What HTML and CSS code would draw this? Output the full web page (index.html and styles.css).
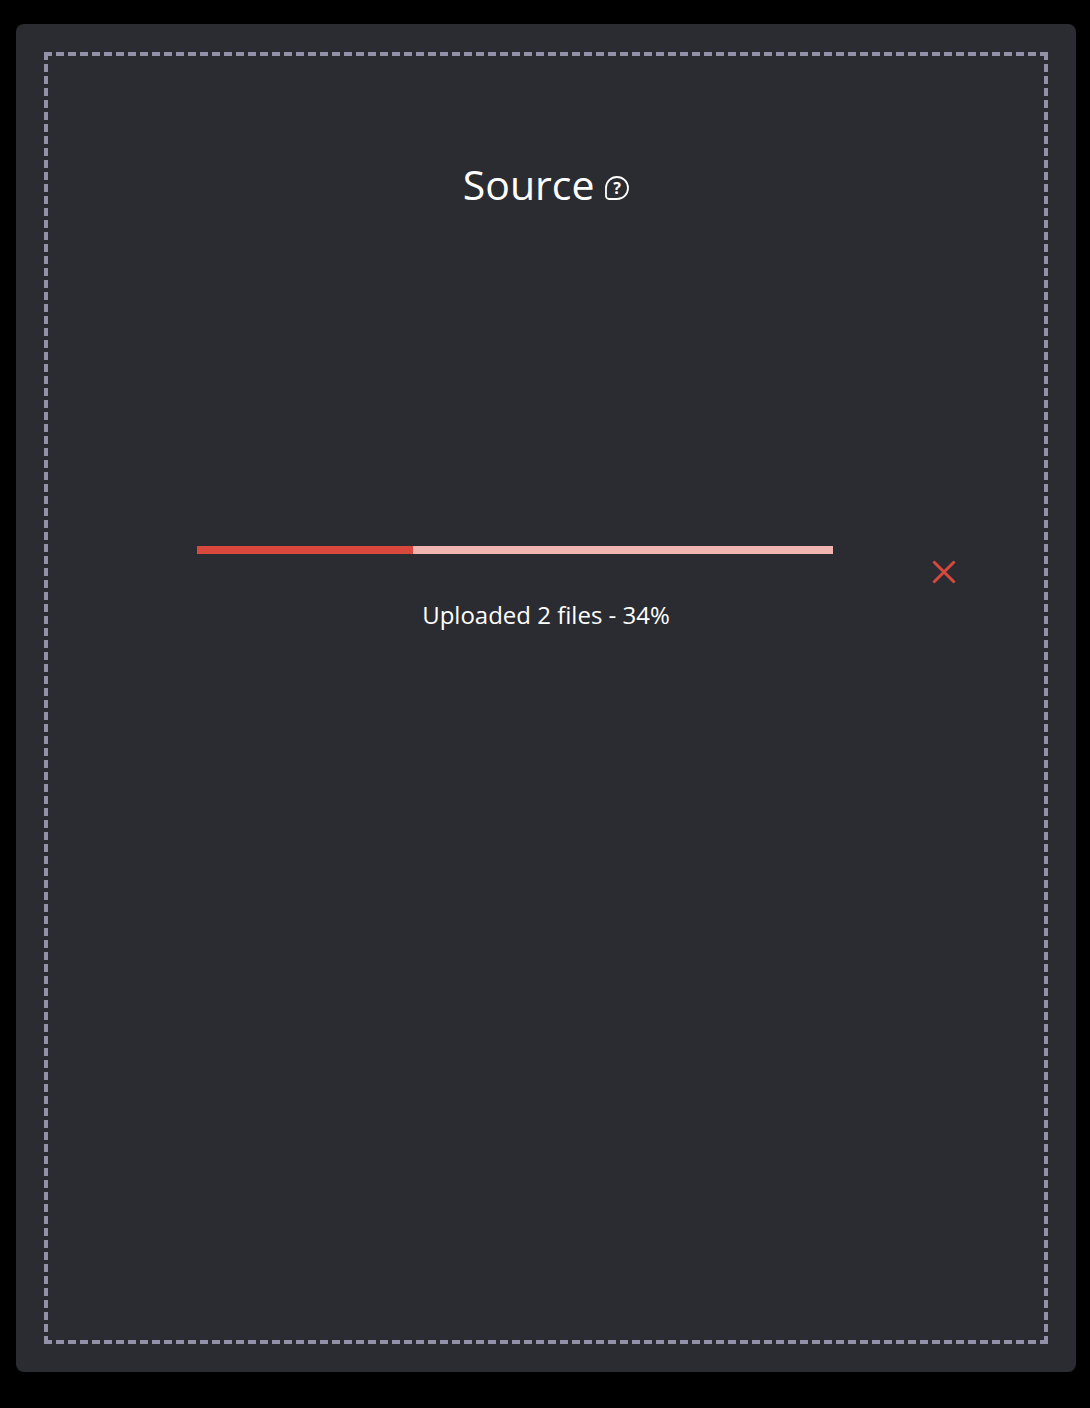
FILE: index.html
```html
<!DOCTYPE html>
<html lang="en">
<head>
<meta charset="utf-8">
<title>Source upload</title>
<link rel="stylesheet" href="styles.css">
</head>
<body>
<main class="card">
  <section class="dropzone">
    <h1 class="title">Source
      <svg class="help" viewBox="0 0 24 24" width="24" height="24" aria-hidden="true">
        <path d="M1 12a11 11 0 1 1 11 11H4a3 3 0 0 1-3-3z" fill="none" stroke="#fff" stroke-width="1.8"/>
        <text x="12" y="17.5" class="help-mark">?</text>
      </svg>
    </h1>
    <div class="progress-row">
      <div class="track"><div class="fill" style="width:34%"></div></div>
      <svg class="cancel" viewBox="0 0 26 26" width="26" height="26" aria-hidden="true">
        <path d="M2.5 2.5l21 21M23.5 2.5l-21 21" stroke="#d9483c" stroke-width="3" fill="none"/>
      </svg>
    </div>
    <p class="status">Uploaded 2 files - 34%</p>
  </section>
</main>
</body>
</html>
```
FILE: styles.css
```css
html, body {
  margin: 0;
  height: 100%;
  background: #000;
}
body {
  box-sizing: border-box;
  padding: 24px 14px 36px 16px;
  font-family: "Open Sans", "Noto Sans", sans-serif;
  color: #fff;
  overflow: hidden;
}
.card {
  box-sizing: border-box;
  height: 1348px;
  padding: 28px;
  background: #2b2c31;
  border-radius: 8px;
}
.dropzone {
  box-sizing: border-box;
  height: 100%;
  padding: 4px;
  display: flex;
  flex-direction: column;
  background-image:
    linear-gradient(to right, #9391a8 8px, transparent 8px),
    linear-gradient(to right, #9391a8 8px, transparent 8px),
    linear-gradient(to bottom, #9391a8 8px, transparent 8px),
    linear-gradient(to bottom, #9391a8 8px, transparent 8px);
  background-size: 12px 4px, 12px 4px, 4px 12px, 4px 12px;
  background-position: left top, left bottom, left top, right top;
  background-repeat: repeat-x, repeat-x, repeat-y, repeat-y;
}
.title {
  margin: 101px 0 0;
  font-size: 41px;
  line-height: 54px;
  font-weight: 400;
  text-align: center;
}
.help {
  vertical-align: 0;
}
.help-mark {
  font-family: "Open Sans", sans-serif;
  font-size: 16px;
  font-weight: 700;
  fill: #fff;
  text-anchor: middle;
}
.progress-row {
  display: flex;
  align-items: flex-start;
  gap: 97.5px;
  margin: 335px 0 0 149px;
}
.track {
  width: 636px;
  height: 8px;
  background: #f0b5b1;
}
.fill {
  height: 100%;
  background: #d9483c;
}
.cancel {
  margin-top: 13px;
}
.status {
  margin: 14px 0 0;
  font-size: 24px;
  line-height: 32px;
  text-align: center;
}
```
